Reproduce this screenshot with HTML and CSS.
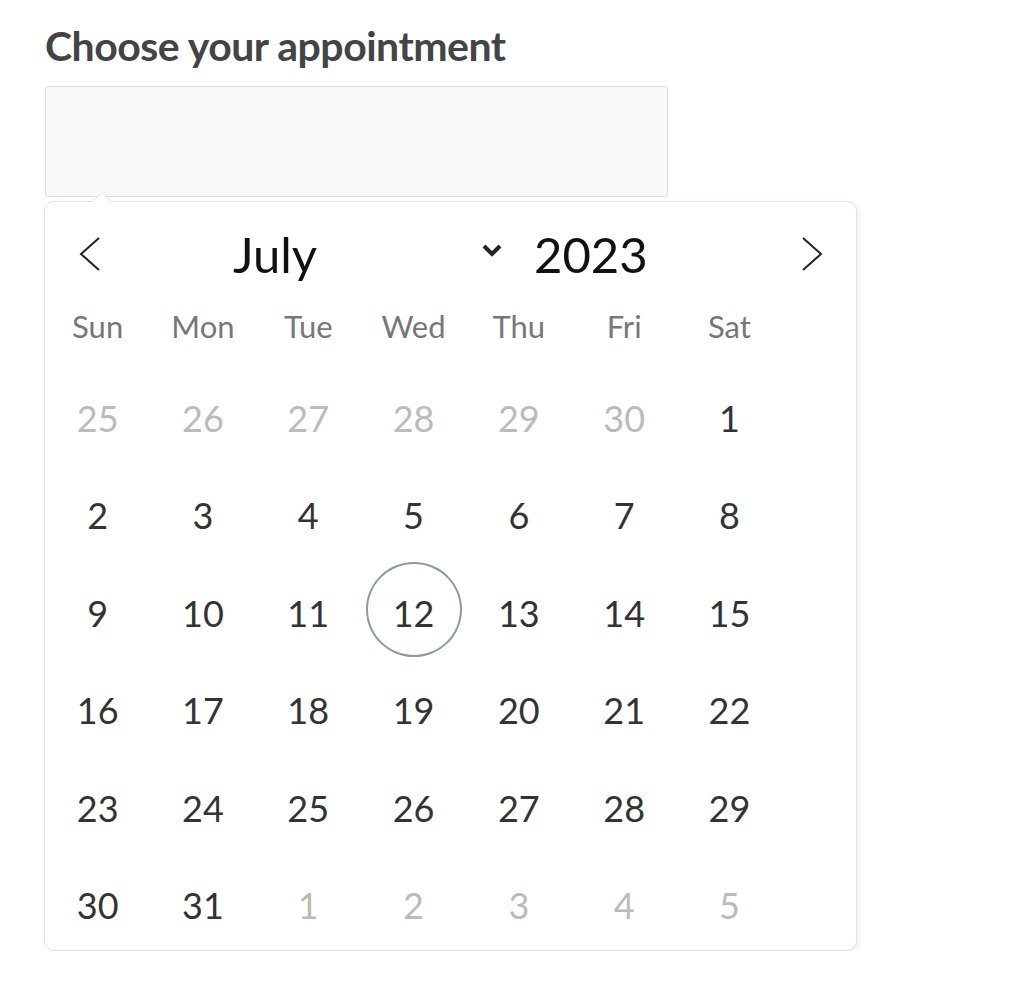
FILE: index.html
```html
<!DOCTYPE html>
<html>
<head>
<meta charset="utf-8">
<link rel="stylesheet" href="styles.css">
</head>
<body>
<div class="wrap">
  <h1 class="title">Choose your appointment</h1>
  <div class="input"></div>
  <div class="popup">
    <span class="tip"></span>
    <div class="head">
      <span class="nav prev"><svg width="24" height="34" viewBox="0 0 24 34"><polyline points="21,1 3,17 21,33" fill="none" stroke="#222" stroke-width="2"/></svg></span>
      <span class="month">July</span>
      <span class="caret"><svg width="20" height="14" viewBox="0 0 20 14"><polyline points="2,2 10,10 18,2" fill="none" stroke="#222" stroke-width="4"/></svg></span>
      <span class="year">2023</span>
      <span class="nav next"><svg width="24" height="34" viewBox="0 0 24 34"><polyline points="3,1 21,17 3,33" fill="none" stroke="#222" stroke-width="2"/></svg></span>
    </div>
    <div class="grid names">
      <span>Sun</span><span>Mon</span><span>Tue</span><span>Wed</span><span>Thu</span><span>Fri</span><span>Sat</span>
    </div>
    <div class="grid days">
      <span class="m">25</span><span class="m">26</span><span class="m">27</span><span class="m">28</span><span class="m">29</span><span class="m">30</span><span>1</span>
      <span>2</span><span>3</span><span>4</span><span>5</span><span>6</span><span>7</span><span>8</span>
      <span>9</span><span>10</span><span>11</span><span class="today">12</span><span>13</span><span>14</span><span>15</span>
      <span>16</span><span>17</span><span>18</span><span>19</span><span>20</span><span>21</span><span>22</span>
      <span>23</span><span>24</span><span>25</span><span>26</span><span>27</span><span>28</span><span>29</span>
      <span>30</span><span>31</span><span class="m">1</span><span class="m">2</span><span class="m">3</span><span class="m">4</span><span class="m">5</span>
    </div>
  </div>
</div>
</body>
</html>
```
FILE: styles.css
```css
html, body { margin: 0; padding: 0; background: #fff; }
body { font-family: Lato, "Open Sans", sans-serif; }
.wrap { padding: 20px 0 0 44px; }
.title {
  margin: 0 0 0 1px;
  font-size: 41px;
  font-weight: 700;
  color: #444;
  letter-spacing: -0.5px;
  line-height: 52px;
  height: 66px;
}
.input {
  margin-left: 1px;
  width: 621px;
  height: 109px;
  border: 1px solid #dcdcdc;
  border-radius: 3px;
  background: #f9f9f9;
}
.popup {
  position: relative;
  margin-top: 4px;
  width: 811px;
  height: 748px;
  overflow: visible;
  border: 1px solid #e2e2e2;
  border-radius: 10px;
  background: #fff;
  box-shadow: 3px 2px 6px rgba(0,0,0,0.06);
}
.tip {
  position: absolute;
  top: -10px;
  left: 47px;
  width: 0; height: 0;
  border-left: 10px solid transparent;
  border-right: 10px solid transparent;
  border-bottom: 10px solid #e2e2e2;
}
.tip::after {
  content: "";
  position: absolute;
  top: 1px; left: -9px;
  border-left: 9px solid transparent;
  border-right: 9px solid transparent;
  border-bottom: 9px solid #fff;
}
.head {
  display: flex;
  align-items: center;
  height: 70px;
  margin-top: 17px;
  color: #111;
}
.nav { display: flex; width: 24px; height: 34px; }
.prev { margin-left: 33px; }
.month {
  width: 380px;
  text-align: center;
  font-size: 49px;
  line-height: 70px;
  padding-right: 34px;
  box-sizing: border-box;
}
.caret { display: flex; margin-top: -6px; }
.year {
  font-size: 49px;
  line-height: 70px;
  margin-left: 32px;
}
.next { margin-left: 152px; }
.grid {
  display: grid;
  grid-template-columns: repeat(7, 105.3px);
}
.grid span {
  display: flex;
  align-items: center;
  justify-content: center;
}
.names { height: 60px; margin-top: 7px; }
.names span { font-size: 31px; color: #777; }
.days { grid-auto-rows: 97.5px; margin-top: 13px; }
.days span { font-size: 36px; color: #333; }
.days span.m { color: #bbb; }
.days span.today { position: relative; }
.days span.today::before {
  content: "";
  position: absolute;
  top: -2px;
  width: 96px; height: 95px;
  border: 2px solid #8d98a5;
  border-radius: 50%;
  box-sizing: border-box;
}
```
